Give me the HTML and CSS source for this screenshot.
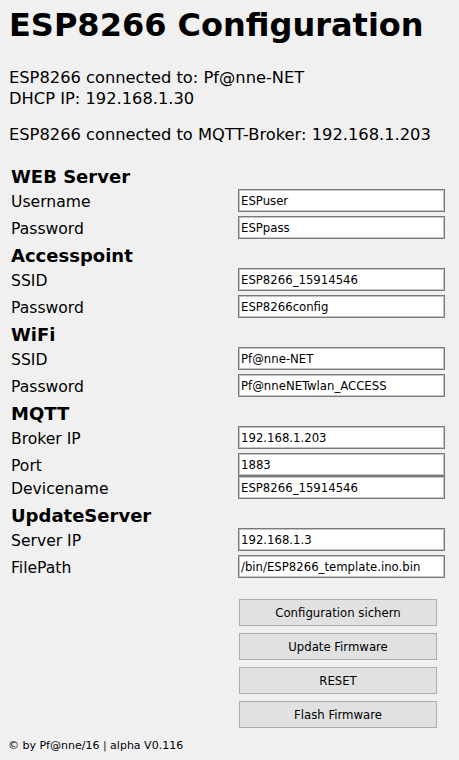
FILE: index.html
```html
<!DOCTYPE html>
<html lang="de">
<head>
<meta charset="utf-8">
<title>ESP8266 Configuration</title>
<link rel="stylesheet" href="styles.css">
</head>
<body>
<div class="page">
  <h1 class="title">ESP8266 Configuration</h1>
  <p class="info info-first">ESP8266 connected to: Pf@nne-NET<br>DHCP IP: 192.168.1.30</p>
  <p class="info info-second">ESP8266 connected to MQTT-Broker: 192.168.1.203</p>

  <form class="form">
    <h3 class="section">WEB Server</h3>
    <label class="label">Username</label><input class="field" type="text" value="ESPuser">
    <label class="label">Password</label><input class="field" type="text" value="ESPpass">

    <h3 class="section">Accesspoint</h3>
    <label class="label">SSID</label><input class="field" type="text" value="ESP8266_15914546">
    <label class="label">Password</label><input class="field" type="text" value="ESP8266config">

    <h3 class="section">WiFi</h3>
    <label class="label">SSID</label><input class="field" type="text" value="Pf@nne-NET">
    <label class="label">Password</label><input class="field" type="text" value="Pf@nneNETwlan_ACCESS">

    <h3 class="section">MQTT</h3>
    <label class="label">Broker IP</label><input class="field" type="text" value="192.168.1.203">
    <label class="label tight">Port</label><input class="field tight" type="text" value="1883">
    <label class="label">Devicename</label><input class="field" type="text" value="ESP8266_15914546">

    <h3 class="section">UpdateServer</h3>
    <label class="label">Server IP</label><input class="field" type="text" value="192.168.1.3">
    <label class="label">FilePath</label><input class="field" type="text" value="/bin/ESP8266_template.ino.bin">
  </form>

  <div class="buttons">
    <button class="btn" type="button">Configuration sichern</button>
    <button class="btn" type="button">Update Firmware</button>
    <button class="btn" type="button">RESET</button>
    <button class="btn" type="button">Flash Firmware</button>
  </div>

  <div class="footer">&copy; by Pf@nne/16 <span class="sep">|</span> alpha V0.116</div>
</div>
</body>
</html>
```

FILE: styles.css
```css
html, body {
  margin: 0;
  padding: 0;
  background: #f0f0f0;
}

body {
  font-family: "DejaVu Sans", Verdana, sans-serif;
  color: #000;
}

.page {
  padding: 7px 0 0 9px;
  display: flex;
  flex-direction: column;
}

.title {
  margin: 0;
  font-size: 32px;
  font-weight: bold;
  line-height: 37px;
}

.info {
  margin: 0;
  font-size: 16.3px;
  line-height: 20.5px;
}

.info-first {
  margin-top: 24px;
}

.info-second {
  margin-top: 16px;
}

.form {
  margin: 18px 0 0 2px;
  display: grid;
  grid-template-columns: 227px 207px;
  align-items: start;
}

.section {
  grid-column: 1 / 3;
  margin: 0;
  font-size: 18px;
  font-weight: bold;
  line-height: 25px;
  height: 25px;
}

.label {
  box-sizing: border-box;
  font-size: 15.6px;
  line-height: 23px;
  height: 23px;
  padding-top: 2px;
  margin-bottom: 4px;
}

.field {
  box-sizing: border-box;
  width: 207px;
  height: 23px;
  margin: 0 0 4px 0;
  padding: 0 2px;
  border: 1px solid #7a7a7a;
  box-shadow: inset 0 0 0 1px #c4c4c4;
  background: #fff;
  font-family: "DejaVu Sans Condensed", "DejaVu Sans", sans-serif;
  font-stretch: condensed;
  font-size: 13px;
  color: #000;
  outline: none;
}

.tight {
  margin-bottom: 0;
}

.buttons {
  margin: 17px 0 0 230px;
  display: flex;
  flex-direction: column;
  gap: 7px;
}

.btn {
  box-sizing: border-box;
  width: 198px;
  height: 27px;
  margin: 0;
  padding: 0;
  background: #e1e1e1;
  border: 1px solid #adadad;
  font-family: "DejaVu Sans Condensed", "DejaVu Sans", sans-serif;
  font-stretch: condensed;
  font-size: 13px;
  color: #000;
}

.footer {
  margin: 11px 0 0 -1px;
  font-size: 11px;
  line-height: 13px;
  color: #000;
}

.sep {
  color: #3a0a1e;
}
```
